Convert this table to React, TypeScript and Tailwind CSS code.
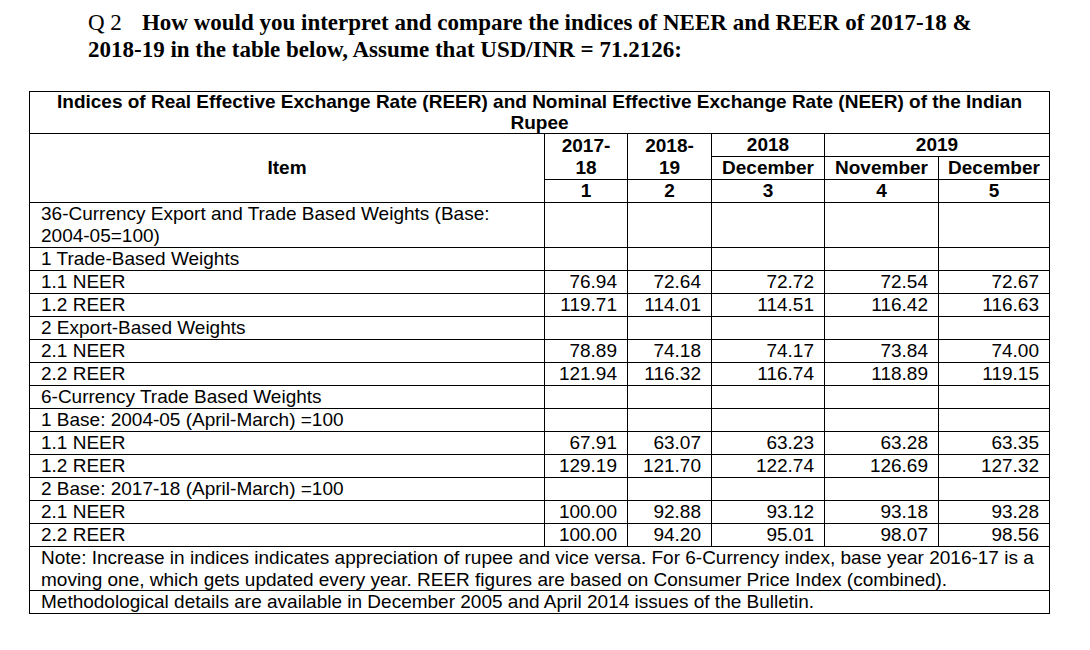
import React from "react";

type Row = { label: string; vals?: string[]; twoLine?: boolean };

const rows: Row[] = [
  { label: "36-Currency Export and Trade Based Weights (Base:\n2004-05=100)", twoLine: true },
  { label: "1 Trade-Based Weights" },
  { label: "1.1 NEER", vals: ["76.94", "72.64", "72.72", "72.54", "72.67"] },
  { label: "1.2 REER", vals: ["119.71", "114.01", "114.51", "116.42", "116.63"] },
  { label: "2 Export-Based Weights" },
  { label: "2.1 NEER", vals: ["78.89", "74.18", "74.17", "73.84", "74.00"] },
  { label: "2.2 REER", vals: ["121.94", "116.32", "116.74", "118.89", "119.15"] },
  { label: "6-Currency Trade Based Weights" },
  { label: "1 Base: 2004-05 (April-March) =100" },
  { label: "1.1 NEER", vals: ["67.91", "63.07", "63.23", "63.28", "63.35"] },
  { label: "1.2 REER", vals: ["129.19", "121.70", "122.74", "126.69", "127.32"] },
  { label: "2 Base: 2017-18 (April-March) =100" },
  { label: "2.1 NEER", vals: ["100.00", "92.88", "93.12", "93.18", "93.28"] },
  { label: "2.2 REER", vals: ["100.00", "94.20", "95.01", "98.07", "98.56"] },
];

export default function App() {
  return (
    <div
      className="w-[1090px] h-[650px] bg-white text-black overflow-hidden"
      style={{ fontFamily: '"Liberation Sans", Arial, sans-serif' }}
    >
      <div
        className="pt-[9px] pl-[88px] text-[23px] leading-[27px] font-bold"
        style={{ fontFamily: '"Liberation Serif", "Times New Roman", serif' }}
      >
        <div>
          <span className="font-normal">Q 2</span>
          <span className="inline-block w-[20px]"></span>
          How would you interpret and compare the indices of NEER and REER of 2017-18 &amp;
        </div>
        <div>2018-19 in the table below, Assume that USD/INR = 71.2126:</div>
      </div>

      <div className="mt-[28px] pl-[29px]">
        <table className="w-[1020px] table-fixed border-collapse">
          <colgroup>
            <col className="w-[515px]" />
            <col className="w-[83px]" />
            <col className="w-[84px]" />
            <col className="w-[113px]" />
            <col className="w-[114px]" />
            <col className="w-[111px]" />
          </colgroup>
          <tbody>
            <tr>
              <td
                colSpan={6}
                className="border border-black p-0 text-center font-bold text-[19px] leading-[20.5px]"
              >
                Indices of Real Effective Exchange Rate (REER) and Nominal Effective Exchange Rate (NEER) of the Indian
                <br />
                Rupee
              </td>
            </tr>
            <tr className="font-bold text-[19px] leading-[22px]">
              <td rowSpan={3} className="border border-black p-0 text-center align-middle">
                Item
              </td>
              <td rowSpan={2} className="border border-black p-0 text-center">
                2017-
                <br />
                18
              </td>
              <td rowSpan={2} className="border border-black p-0 text-center">
                2018-
                <br />
                19
              </td>
              <td className="border border-black p-0 text-center">2018</td>
              <td colSpan={2} className="border border-black p-0 text-center">
                2019
              </td>
            </tr>
            <tr className="font-bold text-[19px] leading-[22px]">
              <td className="border border-black p-0 text-center">December</td>
              <td className="border border-black p-0 text-center">November</td>
              <td className="border border-black p-0 text-center">December</td>
            </tr>
            <tr className="font-bold text-[19px] leading-[22px]">
              <td className="border border-black p-0 text-center">1</td>
              <td className="border border-black p-0 text-center">2</td>
              <td className="border border-black p-0 text-center">3</td>
              <td className="border border-black p-0 text-center">4</td>
              <td className="border border-black p-0 text-center">5</td>
            </tr>
            {rows.map((r, i) => (
              <tr key={i} className="text-[19px] leading-[22px]">
                <td className="border border-black py-0 pl-[11px] pr-0 text-left whitespace-pre-line">
                  {r.label}
                </td>
                {[0, 1, 2, 3, 4].map((j) => (
                  <td key={j} className="border border-black py-0 pl-0 pr-[10px] text-right">
                    {r.vals ? r.vals[j] : ""}
                  </td>
                ))}
              </tr>
            ))}
            <tr className="text-[19px] leading-[21.5px]">
              <td colSpan={6} className="border border-black py-0 pl-[11px] pr-0 text-left">
                Note: Increase in indices indicates appreciation of rupee and vice versa. For 6-Currency index, base year 2016-17 is a
                <br />
                moving one, which gets updated every year. REER figures are based on Consumer Price Index (combined).
              </td>
            </tr>
            <tr className="text-[19px] leading-[22px]">
              <td colSpan={6} className="border border-black py-0 pl-[11px] pr-0 text-left">
                Methodological details are available in December 2005 and April 2014 issues of the Bulletin.
              </td>
            </tr>
          </tbody>
        </table>
      </div>
    </div>
  );
}
